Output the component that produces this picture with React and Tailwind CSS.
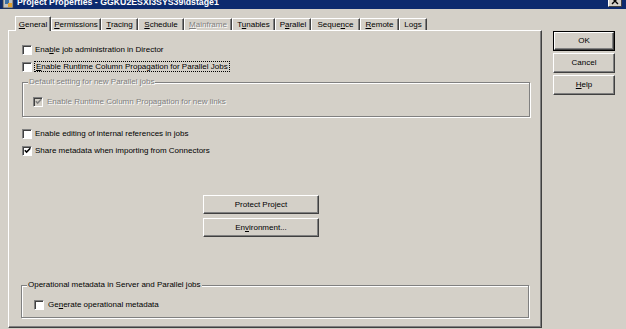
import React from "react";

function Check({ checked, disabled }) {
  return (
    <span
      className={`flex items-center justify-center w-[10px] h-[10px] shrink-0 border border-t-[#808080] border-l-[#808080] border-r-white border-b-white shadow-[inset_1px_1px_0_#404040] ${
        disabled ? "bg-[#d4d0c8]" : "bg-white"
      }`}
    >
      {checked && (
        <svg width="7" height="7" viewBox="0 0 7 7">
          <path
            d="M0.8 3.2 L2.6 5.1 L6.3 1.2"
            stroke={disabled ? "#808080" : "#000"}
            strokeWidth="1.5"
            fill="none"
          />
        </svg>
      )}
    </span>
  );
}

function Row({ children, checked, className = "" }) {
  return (
    <div className={`flex items-center h-[17px] gap-[3px] ${className}`}>
      <Check checked={checked} />
      <span className="leading-[10px]">{children}</span>
    </div>
  );
}

function Btn({ children, className = "" }) {
  return (
    <div
      className={`flex items-center justify-center bg-[#d4d0c8] border border-t-white border-l-white border-r-[#404040] border-b-[#404040] shadow-[inset_-1px_-1px_0_#808080] ${className}`}
    >
      <span className="leading-[10px]">{children}</span>
    </div>
  );
}

const tabs = [
  { w: "w-[50px]", label: <><u>P</u>ermissions</> },
  { w: "w-[37px]", label: <><u>T</u>racing</> },
  { w: "w-[46px]", label: <><u>S</u>chedule</> },
  { w: "w-[48px]", label: <><u>M</u>ainframe</>, disabled: true },
  { w: "w-[43px]", label: <>T<u>u</u>nables</> },
  { w: "w-[36px]", label: <>P<u>a</u>rallel</> },
  { w: "w-[49px]", label: <>Seque<u>n</u>ce</> },
  { w: "w-[39px]", label: <><u>R</u>emote</> },
  { w: "w-[28px]", label: <>Lo<u>g</u>s</> },
];

export default function App() {
  return (
    <div className="w-[626px] h-[329px] overflow-hidden bg-[#d4d0c8] text-[8px] text-black font-['Liberation_Sans',Arial,sans-serif] select-none">
      {/* Title bar */}
      <div className="flex items-start h-[9px] bg-[#0c2a6e] overflow-hidden">
        <svg className="ml-[2px] -mt-[3px] shrink-0" width="12" height="12" viewBox="0 0 12 12">
          <rect x="1" y="1" width="10" height="10" fill="#c0c0c0" stroke="#404040" strokeWidth="0.8" />
          <rect x="3" y="3" width="4" height="4" fill="#3a6ea5" />
          <rect x="6" y="6" width="4" height="4" fill="#e0a030" />
        </svg>
        <span className="ml-[3px] -mt-[3px] text-[8.75px] leading-[10px] font-bold text-white whitespace-nowrap">
          Project Properties - GGKU2ESXI3SYS39\dstage1
        </span>
        <div className="ml-auto mr-[4px] -mt-[6px] w-[14px] h-[13px] flex items-end justify-center bg-[#d4d0c8] border border-t-white border-l-white border-r-[#404040] border-b-[#404040]">
          <svg width="8" height="7" viewBox="0 0 8 7" className="mb-[1px]">
            <path d="M1 0 L7 6 M7 0 L1 6" stroke="#000" strokeWidth="1.4" />
          </svg>
        </div>
      </div>

      <div className="flex">
        {/* Left: tabs + panel */}
        <div className="ml-[8px] w-[534px] flex flex-col">
          <div className="flex items-end h-[21px] pl-[7px]">
            <div className="relative z-10 -mb-[1px] w-[36px] h-[15px] pt-[1px] flex items-center justify-center bg-[#d4d0c8] border-t border-l border-t-white border-l-white border-r border-r-[#404040] shadow-[inset_-1px_0_0_#808080] rounded-t-[1px]">
              <span className="leading-[10px]"><u>G</u>eneral</span>
            </div>
            {tabs.map((t, i) => (
              <div
                key={i}
                className={`${t.w} h-[12px] flex items-center justify-center border-t border-l border-t-white border-l-white border-r border-r-[#404040] shadow-[inset_-1px_0_0_#808080] ${
                  t.disabled ? "text-[#808080] [text-shadow:1px_1px_0_#fff]" : ""
                }`}
              >
                <span className="leading-[10px] whitespace-nowrap">{t.label}</span>
              </div>
            ))}
          </div>

          {/* Panel */}
          <div className="h-[298px] flex flex-col border border-t-white border-l-white border-r-[#404040] border-b-[#404040] shadow-[inset_-1px_-1px_0_#808080]">
            <Row className="mt-[10px] ml-[13px]">
              Ena<u>b</u>le job administration in Director
            </Row>
            <div className="flex items-center h-[17px] gap-[2px] ml-[13px]">
              <Check />
              <span className="leading-[9px] px-[1px] border border-dotted border-black">
                <u>E</u>nable Runtime Column Propagation for Parallel Jobs
              </span>
            </div>

            <div className="relative mt-[7px] ml-[13px] w-[508px] h-[35px] flex items-center pt-[4px] pl-[10px] border border-[#808080] shadow-[inset_1px_1px_0_#fff,1px_1px_0_#fff]">
              <span className="absolute left-[5px] -top-[6px] px-[1px] bg-[#d4d0c8] leading-[10px] text-[#808080] [text-shadow:1px_1px_0_#fff]">
                Default setting for new Parallel jobs
              </span>
              <div className="flex items-center gap-[4px]">
                <Check checked disabled />
                <span className="leading-[10px] text-[#808080] [text-shadow:1px_1px_0_#fff]">
                  Enable Runtime Column Propagation for new links
                </span>
              </div>
            </div>

            <Row className="mt-[8px] ml-[13px]">Enable editing of internal references in jobs</Row>
            <Row checked className="ml-[13px]">Share metadata when importing from Connectors</Row>

            <Btn className="mt-[36px] ml-[194px] w-[116px] h-[19px]">Protect Project</Btn>
            <Btn className="mt-[4px] ml-[194px] w-[116px] h-[19px]">
              En<u>v</u>ironment...
            </Btn>

            <div className="relative mt-[48px] ml-[12px] w-[508px] h-[33px] flex items-center pt-[6px] pl-[12px] border border-[#808080] shadow-[inset_1px_1px_0_#fff,1px_1px_0_#fff]">
              <span className="absolute left-[5px] -top-[6px] px-[1px] bg-[#d4d0c8] leading-[10px]">
                Operational metadata in Server and Parallel jobs
              </span>
              <div className="flex items-center gap-[4px]">
                <Check />
                <span className="leading-[10px]">
                  Ge<u>n</u>erate operational metadata
                </span>
              </div>
            </div>
          </div>
        </div>

        {/* Right buttons */}
        <div className="ml-[11px] mt-[22px] w-[62px] flex flex-col gap-[2px]">
          <div className="h-[20px] border border-black">
            <Btn className="h-full w-full">OK</Btn>
          </div>
          <Btn className="h-[20px]">Cancel</Btn>
          <Btn className="h-[20px]">
            <u>H</u>elp
          </Btn>
        </div>
      </div>
    </div>
  );
}
